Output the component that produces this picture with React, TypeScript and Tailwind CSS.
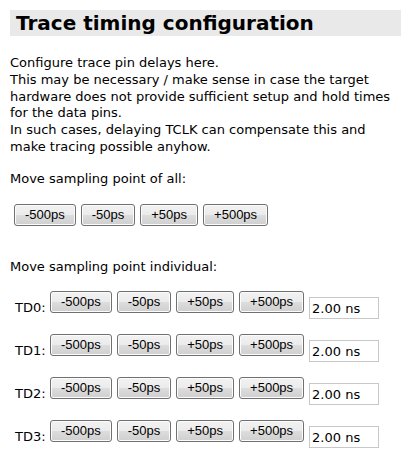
import React from "react";

const labels = ["-500ps", "-50ps", "+50ps", "+500ps"];

function Btn({ children }: { children: React.ReactNode }) {
  return (
    <button
      type="button"
      className="h-[22px] px-[10px] border border-[#707070] rounded-[3px] bg-[linear-gradient(to_bottom,#f2f2f2_0%,#ebebeb_50%,#dddddd_50%,#cfcfcf_100%)] text-[13px] leading-[20px] text-black font-['Liberation_Sans',sans-serif] shadow-[inset_0_0_0_1px_#fcfcfc]"
    >
      {children}
    </button>
  );
}

function BtnGroup() {
  return (
    <div className="flex gap-[5px]">
      {labels.map((l) => (
        <Btn key={l}>{l}</Btn>
      ))}
    </div>
  );
}

export default function App() {
  const rows = ["TD0:", "TD1:", "TD2:", "TD3:"];
  return (
    <div className="w-[411px] h-[456px] bg-white text-black font-['DejaVu_Sans',Verdana,sans-serif] text-[13px] leading-[16.8px] overflow-hidden">
      <div className="pt-[10px] px-[10px]">
        <div className="h-[26px] bg-[#e9e9e9] pl-[6px] text-[20px] font-bold leading-[26px]">
          Trace timing configuration
        </div>
        <div className="mt-[19px]">
          Configure trace pin delays here.
          <br />
          This may be necessary / make sense in case the target hardware does not provide sufficient setup and hold times for the data pins.
          <br />
          In such cases, delaying TCLK can compensate this and make tracing possible anyhow.
        </div>
        <div className="mt-[15px]">Move sampling point of all:</div>
        <div className="mt-[16px] pl-[4px]">
          <BtnGroup />
        </div>
        <div className="mt-[33px]">Move sampling point individual:</div>
        <div className="mt-[16px] pl-[5px] flex flex-col">
          {rows.map((r) => (
            <div key={r} className="h-[43px] flex items-start">
              <span className="mt-[9px] w-[35px]">{r}</span>
              <BtnGroup />
              <input
                readOnly
                value="2.00 ns"
                className="ml-[5px] mt-[6px] w-[70px] h-[22px] border border-[#c8c8c8] px-[2px] text-[13px] font-['DejaVu_Sans',Verdana,sans-serif] text-black outline-none"
              />
            </div>
          ))}
        </div>
      </div>
    </div>
  );
}
